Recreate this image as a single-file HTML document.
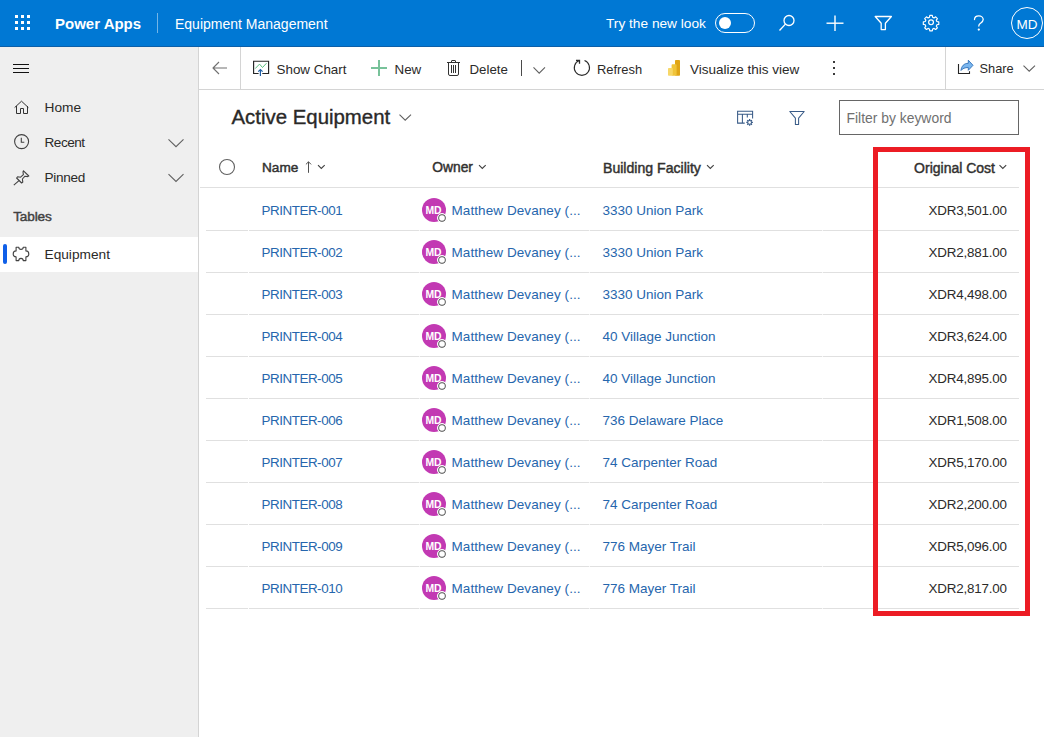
<!DOCTYPE html>
<html><head><meta charset="utf-8">
<style>
*{box-sizing:border-box;margin:0;padding:0}
html,body{width:1044px;height:737px;overflow:hidden;background:#fff;font-family:"Liberation Sans",sans-serif;color:#2b2a29}
.abs{position:absolute}
svg{position:absolute;overflow:visible}
#hdr{position:absolute;left:0;top:0;width:1044px;height:47px;background:#0078d4;border-bottom:1px solid #0c5fa8}
#side{position:absolute;left:0;top:47px;width:199px;height:690px;background:#efefef;border-right:1px solid #d4d4d4}
#cmd{position:absolute;left:199px;top:47px;width:845px;height:43px;background:#fff;border-bottom:1px solid #d4d4d4}
.t{position:absolute;white-space:nowrap;line-height:1}
.link{color:#2666ad}
.hline{position:absolute;height:1px;background:#e0e0e0}
.hd{color:#323130;-webkit-text-stroke:0.45px #323130}
.av{position:absolute;width:24px;height:24px;border-radius:50%;background:#c239b3;color:#fff;font-size:10.4px;font-weight:bold;line-height:25px;text-align:center;letter-spacing:-0.2px;text-indent:-1px}
.badge{position:absolute;width:10px;height:10px;border-radius:50%;background:#fff;border:1px solid #fff;box-shadow:inset 0 0 0 1.2px #6b6b6b}
</style></head><body>
<div id="hdr">
  <svg style="left:15px;top:15px" width="16" height="16" viewBox="0 0 16 16" fill="#fff">
    <rect x="0" y="0" width="3" height="3"/><rect x="6" y="0" width="3" height="3"/><rect x="12" y="0" width="3" height="3"/>
    <rect x="0" y="6" width="3" height="3"/><rect x="6" y="6" width="3" height="3"/><rect x="12" y="6" width="3" height="3"/>
    <rect x="0" y="12" width="3" height="3"/><rect x="6" y="12" width="3" height="3"/><rect x="12" y="12" width="3" height="3"/>
  </svg>
  <div class="t" style="left:55px;top:16px;font-size:15px;font-weight:bold;color:#fff">Power Apps</div>
  <div class="abs" style="left:157px;top:13px;width:1px;height:20px;background:rgba(255,255,255,.45)"></div>
  <div class="t" style="left:175px;top:17px;font-size:14px;color:#fff">Equipment Management</div>
  <div class="t" style="left:606px;top:17px;font-size:13.7px;color:#fff">Try the new look</div>
  <div class="abs" style="left:715px;top:13px;width:40px;height:20px;border:1px solid #fff;border-radius:10px"></div>
  <div class="abs" style="left:719px;top:17px;width:12px;height:12px;background:#fff;border-radius:6px"></div>
  <svg style="left:778px;top:14px" width="18" height="18" viewBox="0 0 18 18" fill="none" stroke="#fff" stroke-width="1.3">
    <circle cx="11" cy="6.5" r="5"/><line x1="7.4" y1="10.1" x2="1.5" y2="16.5"/>
  </svg>
  <svg style="left:826px;top:15px" width="18" height="17" viewBox="0 0 18 17" fill="none" stroke="#fff" stroke-width="1.4">
    <line x1="9" y1="0.5" x2="9" y2="16"/><line x1="0.5" y1="8.2" x2="17.5" y2="8.2"/>
  </svg>
  <svg style="left:874px;top:15px" width="18" height="17" viewBox="0 0 18 17" fill="none" stroke="#fff" stroke-width="1.3" stroke-linejoin="round">
    <path d="M1.2 1.5 H17.4 L11.4 8.3 V14.6 H7.2 V8.3 Z"/>
  </svg>
  <svg style="left:922px;top:13px" width="17.5" height="17.5" viewBox="0 0 24 24" fill="none" stroke="#fff" stroke-width="1.6" stroke-linejoin="round"><g transform="translate(0.411,0.823)">
    <path d="M10.3 2.5h3.4l.5 2.6 1.9.8 2.2-1.5 2.4 2.4-1.5 2.2.8 1.9 2.6.5v3.4l-2.6.5-.8 1.9 1.5 2.2-2.4 2.4-2.2-1.5-1.9.8-.5 2.6h-3.4l-.5-2.6-1.9-.8-2.2 1.5-2.4-2.4 1.5-2.2-.8-1.9-2.6-.5v-3.4l2.6-.5.8-1.9-1.5-2.2 2.4-2.4 2.2 1.5 1.9-.8z"/>
    <circle cx="12" cy="12" r="3.3"/>
  </g></svg>
  <svg style="left:972px;top:15px" width="14" height="17" viewBox="0 0 14 17" fill="none" stroke="#fff" stroke-width="1.3" stroke-linecap="round">
    <path d="M2.5 4.5 C2.5 2 4.5 0.8 6.8 0.8 C9.2 0.8 11.2 2.4 11.2 4.6 C11.2 6.6 9.8 7.4 8.4 8.3 C7.3 9 6.8 9.7 6.8 11"/>
    <circle cx="6.8" cy="14.6" r="0.5" fill="#fff"/>
  </svg>
  <div class="abs" style="left:1011px;top:7px;width:32px;height:32px;border:1px solid #fff;border-radius:50%"></div>
  <div class="t" style="left:1011px;top:17.5px;width:32px;text-align:center;font-size:13.5px;color:#fff">MD</div>
</div>

<div id="side">
</div>
<div class="abs" style="left:13px;top:64px;width:16px;height:1px;background:#111"></div><div class="abs" style="left:13px;top:68px;width:16px;height:1px;background:#111"></div><div class="abs" style="left:13px;top:72px;width:16px;height:1px;background:#111"></div>
<svg style="left:14px;top:100px" width="16" height="15" viewBox="0 0 16 15" fill="none" stroke="#333" stroke-width="1" stroke-linejoin="miter">
  <path d="M0.6 7.6 L7.5 1.2 L14.4 7.6 M2.5 6 V13.5 H6.5 V8.5 H9.5 V13.5 H13.5 V6"/>
</svg>
<svg style="left:14px;top:134px" width="16" height="16" viewBox="0 0 16 16" fill="none" stroke="#424242" stroke-width="1.1">
  <circle cx="7.6" cy="7.6" r="7"/><path d="M7.3 3.8 V8.3 H10.3"/>
</svg>
<svg style="left:13px;top:170px" width="17" height="16" viewBox="0 0 17 16" fill="none" stroke="#424242" stroke-width="1.1" stroke-linejoin="round">
  <path d="M10.5 0.8 L15.8 6 L14.6 6.6 L12 6.2 L9.4 9 L9.8 12 L8.6 13 L3.6 8 L4.6 6.8 L7.6 7.2 L10.4 4.6 L10 2 Z"/>
  <line x1="6" y1="10.6" x2="0.8" y2="15.2"/>
</svg>
<svg style="left:168px;top:138px" width="17" height="10" viewBox="0 0 17 10" fill="none" stroke="#616161" stroke-width="1.1"><g transform="translate(0.000,0.500)">
  <path d="M0.5 0.8 L8 8.2 L15.5 0.8"/>
</g></svg>
<svg style="left:168px;top:173px" width="17" height="10" viewBox="0 0 17 10" fill="none" stroke="#616161" stroke-width="1.1"><g transform="translate(0.000,0.300)">
  <path d="M0.5 0.8 L8 8.2 L15.5 0.8"/>
</g></svg>
<div class="t" style="left:44.5px;top:100.5px;font-size:13.7px">Home</div>
<div class="t" style="left:44.5px;top:136.09px;font-size:13.6px;letter-spacing:-0.5px">Recent</div>
<div class="t" style="left:44.5px;top:171.09px;font-size:13.6px;letter-spacing:-0.3px">Pinned</div>
<div class="t" style="left:13.2px;top:209.69px;font-size:13.6px;color:#424242;-webkit-text-stroke:0.45px #424242;letter-spacing:-0.15px">Tables</div>
<div class="abs" style="left:0;top:237px;width:198px;height:35px;background:#fff"></div>
<div class="abs" style="left:3px;top:244px;width:4px;height:20px;background:#0f5fe8;border-radius:2px"></div>
<svg style="left:13px;top:246px" width="17" height="16" viewBox="0 0 17 16" fill="none" stroke="#424242" stroke-width="1.1" stroke-linejoin="round">
  <path d="M3.1 1.2 H5.8 A2.2 2.2 0 0 0 10.2 1.2 H12.9 V4.9 A2.9 3 0 0 1 12.9 10.9 V14.6 H10.2 A2.2 2.2 0 0 0 5.8 14.6 H3.1 V10.9 A2.9 3 0 0 1 3.1 4.9 Z"/>
</svg>
<div class="t" style="left:44.5px;top:248.1px;font-size:13.7px">Equipment</div>

<div id="cmd"></div>
<div class="abs" style="left:240px;top:47px;width:1px;height:42px;background:#d4d4d4"></div>
<div class="abs" style="left:945px;top:47px;width:1px;height:42px;background:#d4d4d4"></div>
<svg style="left:212px;top:61px" width="16" height="14" viewBox="0 0 16 14" fill="none" stroke="#707070" stroke-width="1.1" stroke-linejoin="round">
  <path d="M15 7 H1 M7 1 L1 7 L7 13"/>
</svg>
<svg style="left:253px;top:60px" width="17" height="16" viewBox="0 0 17 16" fill="none" stroke-width="1.1"><g transform="translate(0.000,0.500)">
  <path d="M5.6 13 H0.6 V0.7 H15.6 V13 H9.3" stroke="#242424" stroke-width="1.15"/>
  <path d="M2.2 8.1 L6.5 3.6 L9.5 7 L13.5 2.7" stroke="#5cbf7f" stroke-width="1"/>
  <path d="M7.4 15.4 V9 M5.2 11.2 L7.4 9 L9.6 11.2" stroke="#1f5fa6" stroke-width="1.2"/>
</g></svg>
<div class="t" style="left:276.5px;top:63.26px;font-size:13.4px">Show Chart</div>
<div class="abs" style="left:378px;top:60px;width:2px;height:16px;background:#78c29a"></div><div class="abs" style="left:371px;top:67px;width:16px;height:2px;background:#78c29a"></div>
<div class="t" style="left:394.5px;top:63.26px;font-size:13.4px">New</div>
<svg style="left:446px;top:59px" width="15" height="18" viewBox="0 0 15 18" fill="none" stroke="#333" stroke-width="1" stroke-linejoin="round">
  <path d="M1 3.5 H14 M5.5 3.5 V2 Q5.5 1.5 6 1.5 H9 Q9.5 1.5 9.5 2 V3.5 M2.5 3.5 V15 Q2.5 16.5 4 16.5 H11 Q12.5 16.5 12.5 15 V3.5 M5.5 6 V14 M7.5 6 V14 M9.5 6 V14"/>
</svg>
<div class="t" style="left:469.5px;top:63.34px;font-size:13.3px">Delete</div>
<div class="abs" style="left:521px;top:60px;width:1px;height:16px;background:#4a4a4a"></div>
<svg style="left:533px;top:66px" width="13" height="8" viewBox="0 0 13 8" fill="none" stroke="#616161" stroke-width="1.1"><g transform="translate(0.000,0.500)">
  <path d="M0.5 0.8 L6.2 6.6 L12 0.8"/>
</g></svg>
<svg style="left:573px;top:59px" width="18" height="18" viewBox="0 0 18 18" fill="none" stroke="#2b2b2b" stroke-width="1.1">
  <path d="M11.5 1.6 A7.6 7.6 0 1 1 6.3 1.6"/>
  <path d="M3 1.3 H6.5 V4.8" stroke-width="1.3"/>
</svg>
<div class="t" style="left:597px;top:63.68px;font-size:12.9px">Refresh</div>
<svg style="left:668px;top:60px" width="13" height="16" viewBox="0 0 13 16">
  <rect x="7" y="0" width="5" height="15.8" rx="0.8" fill="#e0a516"/>
  <rect x="3.6" y="4.2" width="5" height="11.6" rx="0.8" fill="#f0c43a"/>
  <rect x="0" y="8" width="4.8" height="7.8" rx="0.8" fill="#f7d768"/>
</svg>
<div class="t" style="left:690px;top:63.17px;font-size:13.5px">Visualize this view</div>
<div class="abs" style="left:833px;top:61px;width:2px;height:2px;background:#3a3a3a"></div><div class="abs" style="left:833px;top:67px;width:2px;height:2px;background:#3a3a3a"></div><div class="abs" style="left:833px;top:73px;width:2px;height:2px;background:#3a3a3a"></div>
<svg style="left:957px;top:59px" width="18" height="16" viewBox="0 0 18 16" fill="none">
  <path d="M1.5 5 V14.5 H12.5 V12.3" stroke="#242424" stroke-width="1.1"/>
  <path d="M4 11.5 C4.5 7 7 4.3 11.3 4.3 V1.2 L16 6.3 L11.3 11.3 V8.5 C8 8.5 5.5 9.5 4 11.5 Z" fill="#7ab6ee" stroke="#2f6fb8" stroke-width="0.9" stroke-linejoin="round"/>
</svg>
<div class="t" style="left:979.5px;top:62.86px;font-size:12.8px">Share</div>
<svg style="left:1023px;top:64px" width="13" height="8" viewBox="0 0 13 8" fill="none" stroke="#616161" stroke-width="1.1"><g transform="translate(0.000,0.800)">
  <path d="M0.5 0.8 L6.2 6.4 L12 0.8"/>
</g></svg>

<div class="t" style="left:231.5px;top:106.73px;font-size:20.4px;-webkit-text-stroke:0.35px #242424">Active Equipment</div>
<svg style="left:399px;top:113px" width="13" height="8" viewBox="0 0 13 8" fill="none" stroke="#616161" stroke-width="1.1"><g transform="translate(0.000,0.800)">
  <path d="M0.5 0.8 L6.2 6.4 L12 0.8"/>
</g></svg>
<svg style="left:737px;top:110px" width="17" height="17" viewBox="0 0 17 17" fill="none" stroke="#3a5c88" stroke-width="1.05"><g transform="translate(0.000,0.500)">
  <path d="M7.7 12.6 H0.6 V0.7 H15.6 V7.9 M0.6 3.7 H15.6 M5.4 3.7 V12.6 M10.3 3.7 V6.9"/>
  <circle cx="12.6" cy="11.9" r="1.9"/>
  <path d="M12.6 8.6 V10 M12.6 13.8 V15.2 M9.3 11.9 H10.7 M14.5 11.9 H15.9 M10.3 9.6 L11.2 10.5 M14 13.3 L14.9 14.2 M14.9 9.6 L14 10.5 M11.2 13.3 L10.3 14.2" stroke-width="1.3"/>
</g></svg>
<svg style="left:789px;top:110px" width="17" height="15" viewBox="0 0 17 15" fill="none" stroke="#3a5c88" stroke-width="1.05" stroke-linejoin="round"><g transform="translate(0.000,0.500)">
  <path d="M0.8 1 H15.2 L9.6 7.6 V14 H6.4 V7.6 Z"/>
</g></svg>
<div class="abs" style="left:839px;top:100px;width:180px;height:35px;border:1px solid #666"></div>
<div class="t" style="left:846.5px;top:112.33px;font-size:13.9px;color:#707070">Filter by keyword</div>

<svg style="left:219px;top:159px" width="16" height="16" viewBox="0 0 16 16" fill="none" stroke="#616161" stroke-width="1.1">
  <circle cx="8" cy="8" r="7.5"/>
</svg>
<div class="t hd" style="left:262px;top:160.99px;font-size:13.6px">Name</div>
<svg style="left:305px;top:161px" width="8" height="13" viewBox="0 0 8 13" fill="none" stroke="#505050" stroke-width="1">
  <path d="M3.5 11.8 V0.8 M0.9 3.4 L3.5 0.8 L6.1 3.4"/>
</svg>
<svg style="left:317px;top:164px" width="8" height="5" viewBox="0 0 8 5" fill="none" stroke="#424242" stroke-width="1.1"><g transform="translate(0.500,0.500)">
  <path d="M0.5 0.6 L3.8 4 L7.2 0.6"/>
</g></svg>
<div class="t hd" style="left:432.3px;top:160.82px;font-size:13.8px">Owner</div>
<svg style="left:478px;top:164px" width="8" height="5" viewBox="0 0 8 5" fill="none" stroke="#424242" stroke-width="1.1"><g transform="translate(0.500,0.500)">
  <path d="M0.5 0.6 L3.8 4 L7.2 0.6"/>
</g></svg>
<div class="t hd" style="left:603px;top:160.56px;font-size:14.1px">Building Facility</div>
<svg style="left:706px;top:164px" width="8" height="5" viewBox="0 0 8 5" fill="none" stroke="#424242" stroke-width="1.1"><g transform="translate(0.500,0.500)">
  <path d="M0.5 0.6 L3.8 4 L7.2 0.6"/>
</g></svg>
<div class="t hd" style="left:850px;width:145px;text-align:right;top:160.65px;font-size:14px">Original Cost</div>
<svg style="left:999px;top:164px" width="8" height="5" viewBox="0 0 8 5" fill="none" stroke="#424242" stroke-width="1.1"><g transform="translate(0.000,0.500)">
  <path d="M0.5 0.6 L3.8 4 L7.2 0.6"/>
</g></svg>
<div class="hline" style="left:200px;top:187px;width:819px"></div>
<div class="t link rt" style="left:261.5px;top:204.06px;font-size:13.4px;letter-spacing:-0.45px">PRINTER-001</div>
<div class="av" style="left:422px;top:198px">MD</div><div class="badge" style="left:437px;top:213px"></div>
<div class="t link" style="left:451.5px;top:203.97px;font-size:13.5px;letter-spacing:0.08px">Matthew Devaney (...</div>
<div class="t link" style="left:602.5px;top:203.97px;font-size:13.5px">3330 Union Park</div>
<div class="t rt" style="left:900px;width:106.8px;text-align:right;top:204.06px;font-size:13.4px;letter-spacing:-0.2px">XDR3,501.00</div>
<div class="hline" style="left:206px;top:230px;width:813px"></div><div class="abs" style="left:248px;top:230px;width:1px;height:1px;background:#fff"></div><div class="abs" style="left:419px;top:230px;width:1px;height:1px;background:#f6f6f6"></div><div class="abs" style="left:589px;top:230px;width:1px;height:1px;background:#f6f6f6"></div><div class="abs" style="left:822px;top:230px;width:1px;height:1px;background:#f6f6f6"></div>
<div class="t link rt" style="left:261.5px;top:246.06px;font-size:13.4px;letter-spacing:-0.45px">PRINTER-002</div>
<div class="av" style="left:422px;top:240px">MD</div><div class="badge" style="left:437px;top:255px"></div>
<div class="t link" style="left:451.5px;top:245.97px;font-size:13.5px;letter-spacing:0.08px">Matthew Devaney (...</div>
<div class="t link" style="left:602.5px;top:245.97px;font-size:13.5px">3330 Union Park</div>
<div class="t rt" style="left:900px;width:106.8px;text-align:right;top:246.06px;font-size:13.4px;letter-spacing:-0.2px">XDR2,881.00</div>
<div class="hline" style="left:206px;top:272px;width:813px"></div><div class="abs" style="left:248px;top:272px;width:1px;height:1px;background:#fff"></div><div class="abs" style="left:419px;top:272px;width:1px;height:1px;background:#f6f6f6"></div><div class="abs" style="left:589px;top:272px;width:1px;height:1px;background:#f6f6f6"></div><div class="abs" style="left:822px;top:272px;width:1px;height:1px;background:#f6f6f6"></div>
<div class="t link rt" style="left:261.5px;top:288.06px;font-size:13.4px;letter-spacing:-0.45px">PRINTER-003</div>
<div class="av" style="left:422px;top:282px">MD</div><div class="badge" style="left:437px;top:297px"></div>
<div class="t link" style="left:451.5px;top:287.97px;font-size:13.5px;letter-spacing:0.08px">Matthew Devaney (...</div>
<div class="t link" style="left:602.5px;top:287.97px;font-size:13.5px">3330 Union Park</div>
<div class="t rt" style="left:900px;width:106.8px;text-align:right;top:288.06px;font-size:13.4px;letter-spacing:-0.2px">XDR4,498.00</div>
<div class="hline" style="left:206px;top:314px;width:813px"></div><div class="abs" style="left:248px;top:314px;width:1px;height:1px;background:#fff"></div><div class="abs" style="left:419px;top:314px;width:1px;height:1px;background:#f6f6f6"></div><div class="abs" style="left:589px;top:314px;width:1px;height:1px;background:#f6f6f6"></div><div class="abs" style="left:822px;top:314px;width:1px;height:1px;background:#f6f6f6"></div>
<div class="t link rt" style="left:261.5px;top:330.06px;font-size:13.4px;letter-spacing:-0.45px">PRINTER-004</div>
<div class="av" style="left:422px;top:324px">MD</div><div class="badge" style="left:437px;top:339px"></div>
<div class="t link" style="left:451.5px;top:329.97px;font-size:13.5px;letter-spacing:0.08px">Matthew Devaney (...</div>
<div class="t link" style="left:602.5px;top:329.97px;font-size:13.5px">40 Village Junction</div>
<div class="t rt" style="left:900px;width:106.8px;text-align:right;top:330.06px;font-size:13.4px;letter-spacing:-0.2px">XDR3,624.00</div>
<div class="hline" style="left:206px;top:356px;width:813px"></div><div class="abs" style="left:248px;top:356px;width:1px;height:1px;background:#fff"></div><div class="abs" style="left:419px;top:356px;width:1px;height:1px;background:#f6f6f6"></div><div class="abs" style="left:589px;top:356px;width:1px;height:1px;background:#f6f6f6"></div><div class="abs" style="left:822px;top:356px;width:1px;height:1px;background:#f6f6f6"></div>
<div class="t link rt" style="left:261.5px;top:372.06px;font-size:13.4px;letter-spacing:-0.45px">PRINTER-005</div>
<div class="av" style="left:422px;top:366px">MD</div><div class="badge" style="left:437px;top:381px"></div>
<div class="t link" style="left:451.5px;top:371.97px;font-size:13.5px;letter-spacing:0.08px">Matthew Devaney (...</div>
<div class="t link" style="left:602.5px;top:371.97px;font-size:13.5px">40 Village Junction</div>
<div class="t rt" style="left:900px;width:106.8px;text-align:right;top:372.06px;font-size:13.4px;letter-spacing:-0.2px">XDR4,895.00</div>
<div class="hline" style="left:206px;top:398px;width:813px"></div><div class="abs" style="left:248px;top:398px;width:1px;height:1px;background:#fff"></div><div class="abs" style="left:419px;top:398px;width:1px;height:1px;background:#f6f6f6"></div><div class="abs" style="left:589px;top:398px;width:1px;height:1px;background:#f6f6f6"></div><div class="abs" style="left:822px;top:398px;width:1px;height:1px;background:#f6f6f6"></div>
<div class="t link rt" style="left:261.5px;top:414.06px;font-size:13.4px;letter-spacing:-0.45px">PRINTER-006</div>
<div class="av" style="left:422px;top:408px">MD</div><div class="badge" style="left:437px;top:423px"></div>
<div class="t link" style="left:451.5px;top:413.97px;font-size:13.5px;letter-spacing:0.08px">Matthew Devaney (...</div>
<div class="t link" style="left:602.5px;top:413.97px;font-size:13.5px">736 Delaware Place</div>
<div class="t rt" style="left:900px;width:106.8px;text-align:right;top:414.06px;font-size:13.4px;letter-spacing:-0.2px">XDR1,508.00</div>
<div class="hline" style="left:206px;top:440px;width:813px"></div><div class="abs" style="left:248px;top:440px;width:1px;height:1px;background:#fff"></div><div class="abs" style="left:419px;top:440px;width:1px;height:1px;background:#f6f6f6"></div><div class="abs" style="left:589px;top:440px;width:1px;height:1px;background:#f6f6f6"></div><div class="abs" style="left:822px;top:440px;width:1px;height:1px;background:#f6f6f6"></div>
<div class="t link rt" style="left:261.5px;top:456.06px;font-size:13.4px;letter-spacing:-0.45px">PRINTER-007</div>
<div class="av" style="left:422px;top:450px">MD</div><div class="badge" style="left:437px;top:465px"></div>
<div class="t link" style="left:451.5px;top:455.97px;font-size:13.5px;letter-spacing:0.08px">Matthew Devaney (...</div>
<div class="t link" style="left:602.5px;top:455.97px;font-size:13.5px">74 Carpenter Road</div>
<div class="t rt" style="left:900px;width:106.8px;text-align:right;top:456.06px;font-size:13.4px;letter-spacing:-0.2px">XDR5,170.00</div>
<div class="hline" style="left:206px;top:482px;width:813px"></div><div class="abs" style="left:248px;top:482px;width:1px;height:1px;background:#fff"></div><div class="abs" style="left:419px;top:482px;width:1px;height:1px;background:#f6f6f6"></div><div class="abs" style="left:589px;top:482px;width:1px;height:1px;background:#f6f6f6"></div><div class="abs" style="left:822px;top:482px;width:1px;height:1px;background:#f6f6f6"></div>
<div class="t link rt" style="left:261.5px;top:498.06px;font-size:13.4px;letter-spacing:-0.45px">PRINTER-008</div>
<div class="av" style="left:422px;top:492px">MD</div><div class="badge" style="left:437px;top:507px"></div>
<div class="t link" style="left:451.5px;top:497.97px;font-size:13.5px;letter-spacing:0.08px">Matthew Devaney (...</div>
<div class="t link" style="left:602.5px;top:497.97px;font-size:13.5px">74 Carpenter Road</div>
<div class="t rt" style="left:900px;width:106.8px;text-align:right;top:498.06px;font-size:13.4px;letter-spacing:-0.2px">XDR2,200.00</div>
<div class="hline" style="left:206px;top:524px;width:813px"></div><div class="abs" style="left:248px;top:524px;width:1px;height:1px;background:#fff"></div><div class="abs" style="left:419px;top:524px;width:1px;height:1px;background:#f6f6f6"></div><div class="abs" style="left:589px;top:524px;width:1px;height:1px;background:#f6f6f6"></div><div class="abs" style="left:822px;top:524px;width:1px;height:1px;background:#f6f6f6"></div>
<div class="t link rt" style="left:261.5px;top:540.06px;font-size:13.4px;letter-spacing:-0.45px">PRINTER-009</div>
<div class="av" style="left:422px;top:534px">MD</div><div class="badge" style="left:437px;top:549px"></div>
<div class="t link" style="left:451.5px;top:539.97px;font-size:13.5px;letter-spacing:0.08px">Matthew Devaney (...</div>
<div class="t link" style="left:602.5px;top:539.97px;font-size:13.5px">776 Mayer Trail</div>
<div class="t rt" style="left:900px;width:106.8px;text-align:right;top:540.06px;font-size:13.4px;letter-spacing:-0.2px">XDR5,096.00</div>
<div class="hline" style="left:206px;top:566px;width:813px"></div><div class="abs" style="left:248px;top:566px;width:1px;height:1px;background:#fff"></div><div class="abs" style="left:419px;top:566px;width:1px;height:1px;background:#f6f6f6"></div><div class="abs" style="left:589px;top:566px;width:1px;height:1px;background:#f6f6f6"></div><div class="abs" style="left:822px;top:566px;width:1px;height:1px;background:#f6f6f6"></div>
<div class="t link rt" style="left:261.5px;top:582.06px;font-size:13.4px;letter-spacing:-0.45px">PRINTER-010</div>
<div class="av" style="left:422px;top:576px">MD</div><div class="badge" style="left:437px;top:591px"></div>
<div class="t link" style="left:451.5px;top:581.97px;font-size:13.5px;letter-spacing:0.08px">Matthew Devaney (...</div>
<div class="t link" style="left:602.5px;top:581.97px;font-size:13.5px">776 Mayer Trail</div>
<div class="t rt" style="left:900px;width:106.8px;text-align:right;top:582.06px;font-size:13.4px;letter-spacing:-0.2px">XDR2,817.00</div>
<div class="hline" style="left:206px;top:608px;width:813px"></div><div class="abs" style="left:248px;top:608px;width:1px;height:1px;background:#fff"></div><div class="abs" style="left:419px;top:608px;width:1px;height:1px;background:#f6f6f6"></div><div class="abs" style="left:589px;top:608px;width:1px;height:1px;background:#f6f6f6"></div><div class="abs" style="left:822px;top:608px;width:1px;height:1px;background:#f6f6f6"></div>
<div class="abs" style="left:873px;top:147px;width:157px;height:469px;border:5px solid #ec1c24"></div>
</body></html>
